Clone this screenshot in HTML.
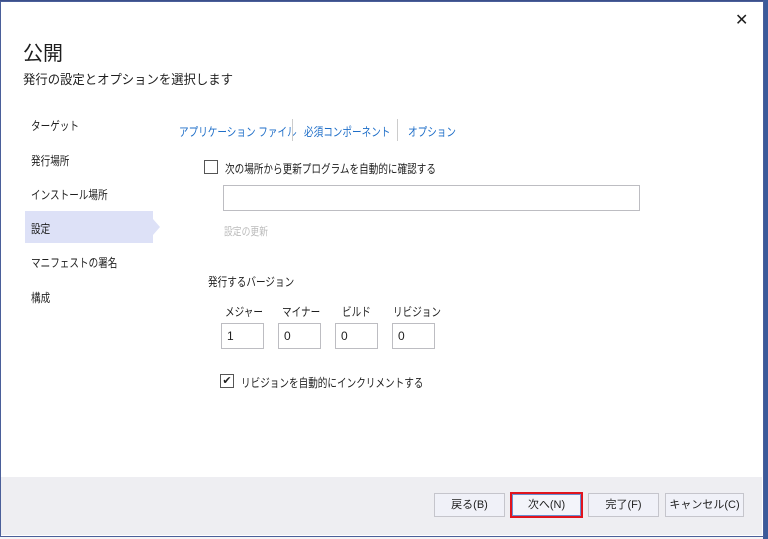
<!DOCTYPE html>
<html><head><meta charset="utf-8"><style>
*{margin:0;padding:0;box-sizing:border-box}
body{width:768px;height:539px;overflow:hidden;background:#f4f4f6;font-family:"Liberation Sans","Noto Sans CJK JP",sans-serif;position:relative;color:#1e1e1e}
.topbar{position:absolute;left:0;top:0;width:768px;height:3px;background:#3b4f8a}
.rightbar{position:absolute;left:763px;top:0;width:5px;height:539px;background:#3b5a9a}
.dlg{position:absolute;left:0;top:1px;width:764px;height:536px;background:#fff;border:1.5px solid #4a5f9a}
.t{position:absolute;white-space:nowrap;font-size:12px;transform:scaleX(0.8);transform-origin:0 0}
.foot{position:absolute;left:0;top:475px;width:761px;height:58px;background:#eeeef2}
.btn{position:absolute;top:491px;height:24px;background:#f0f1f8;border:1px solid #c5c5cc;font-size:11px;text-align:center;line-height:22px}
.inp{position:absolute;height:26px;border:1px solid #bdbdc2;background:#fff;font-size:12px;padding-left:5px;line-height:24px}
.link{color:#1e6ec8}
</style></head><body>
<div class="topbar"></div>
<div class="rightbar"></div>
<div class="dlg">
<div class="t" style="left:22px;top:35px;font-size:20px;transform:none">公開</div>
<div class="t" style="left:22px;top:67px;font-size:13px;transform:scaleX(0.95)">発行の設定とオプションを選択します</div>
<div class="t" style="left:734px;top:8px;font-size:16px;transform:none">✕</div>
<div class="t" style="left:30px;top:115px">ターゲット</div>
<div class="t" style="left:30px;top:150px">発行場所</div>
<div class="t" style="left:30px;top:184px">インストール場所</div>
<div style="position:absolute;left:24px;top:209px;width:128px;height:32px;background:#dde1f7"></div>
<div style="position:absolute;left:152px;top:217px;width:0;height:0;border-top:8px solid transparent;border-bottom:8px solid transparent;border-left:7px solid #dde1f7"></div>
<div class="t" style="left:30px;top:218px">設定</div>
<div class="t" style="left:30px;top:252px">マニフェストの署名</div>
<div class="t" style="left:30px;top:287px">構成</div>
<div class="t link" style="left:178px;top:121px">アプリケーション ファイル</div>
<div style="position:absolute;left:291px;top:117px;width:1px;height:22px;background:#ccc"></div>
<div class="t link" style="left:303px;top:121px">必須コンポーネント</div>
<div style="position:absolute;left:396px;top:117px;width:1px;height:22px;background:#ccc"></div>
<div class="t link" style="left:407px;top:121px">オプション</div>
<div style="position:absolute;left:203px;top:158px;width:14px;height:14px;border:1px solid #555;background:#fff"></div>
<div class="t" style="left:224px;top:158px">次の場所から更新プログラムを自動的に確認する</div>
<div class="inp" style="left:222px;top:183px;width:417px"></div>
<div class="t" style="left:223px;top:221px;color:#bbb;font-size:11px">設定の更新</div>
<div class="t" style="left:207px;top:271px">発行するバージョン</div>
<div class="t" style="left:224px;top:301px">メジャー</div>
<div class="t" style="left:281px;top:301px">マイナー</div>
<div class="t" style="left:341px;top:301px">ビルド</div>
<div class="t" style="left:392px;top:301px">リビジョン</div>
<div class="inp" style="left:220px;top:321px;width:43px">1</div>
<div class="inp" style="left:277px;top:321px;width:43px">0</div>
<div class="inp" style="left:334px;top:321px;width:43px">0</div>
<div class="inp" style="left:391px;top:321px;width:43px">0</div>
<div style="position:absolute;left:219px;top:372px;width:14px;height:14px;border:1px solid #555;background:#fff;font-size:11px;line-height:12px;text-align:center">✔</div>
<div class="t" style="left:240px;top:372px">リビジョンを自動的にインクリメントする</div>
<div class="foot"></div>
<div class="btn" style="left:433px;width:71px">戻る(B)</div>
<div class="btn" style="left:509px;width:73px;border:2px solid #e0141e;background:#f3f4fa;line-height:20px;height:26px;top:490px"><div style="border:1px solid #6a8ed0;height:100%">次へ(N)</div></div>
<div class="btn" style="left:587px;width:71px">完了(F)</div>
<div class="btn" style="left:664px;width:79px">キャンセル(C)</div>
</div>
</body></html>
